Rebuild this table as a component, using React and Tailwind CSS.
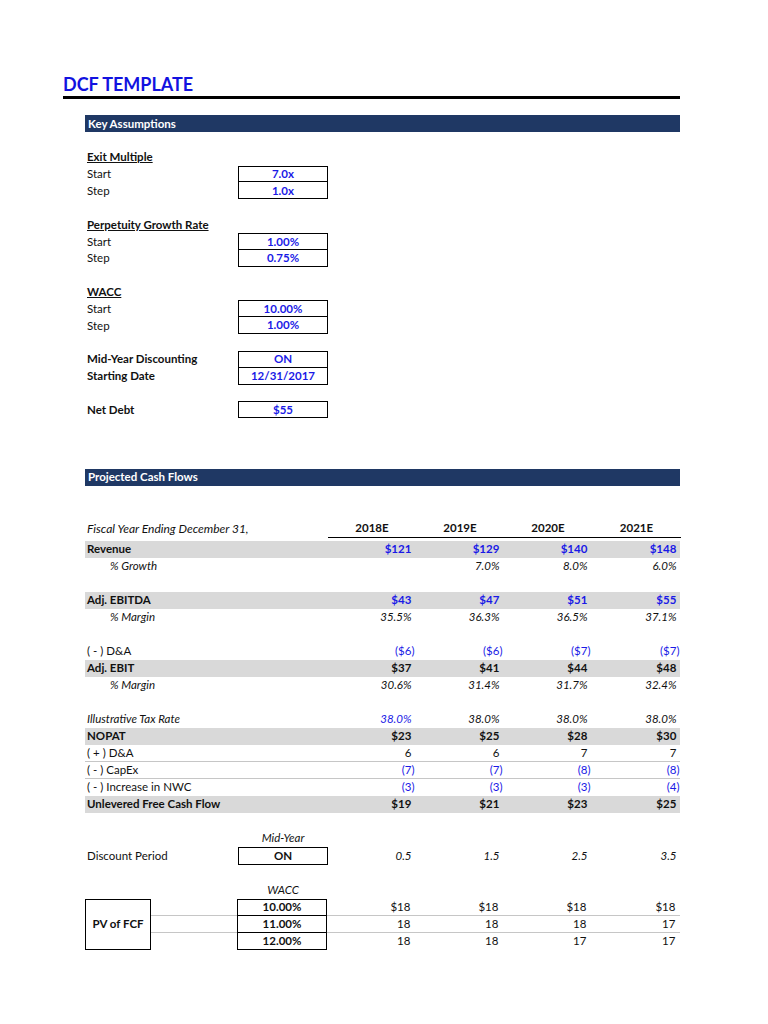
import React from 'react';

const GRID = 'grid grid-cols-[153px_90px_88px_88px_88px_89px]';

const Num = ({ v }) => (
    <>
        {v}
        {v && !v.startsWith('(') && <span className="invisible">)</span>}
    </>
);

const Assumption = ({ label, labelClass = '', box, first }) => (
    <div className="flex h-[16.85px]">
        <div className={`w-[153px] pl-[2px] flex items-center whitespace-nowrap ${labelClass}`}>{label}</div>
        {box && (
            <div className={`w-[90px] flex items-center justify-center border-x border-b border-black font-bold text-[#1a1ae6] ${first ? 'border-t' : ''}`}>
                {box}
            </div>
        )}
    </div>
);

const Blank = ({ h = 'h-[16.85px]' }) => <div className={h} />;

const DataRow = ({ label, labelClass = '', values = [], valueClass = '', firstClass, gray, line }) => (
    <div className={`${GRID} h-[17px] ${gray ? 'bg-[#d9d9d9]' : ''} ${line ? 'border-b border-[#c6c6c6]' : ''}`}>
        <div className={`pl-[2px] flex items-center whitespace-nowrap ${labelClass}`}>{label}</div>
        <div />
        {values.map((v, i) => (
            <div key={i} className={`flex items-center justify-end pr-[1.5px] ${i === 0 && firstClass ? firstClass : valueClass}`}>
                <Num v={v} />
            </div>
        ))}
    </div>
);

const SectionBar = ({ title }) => (
    <div className="h-[16.85px] bg-[#1f3864] text-white font-bold pl-[3px] flex items-center">{title}</div>
);

const App = () => {
    const blue = 'text-[#1a1ae6]';
    const pv = [
        { w: '10.00%', v: ['$18', '$18', '$18', '$18'] },
        { w: '11.00%', v: ['18', '18', '18', '17'] },
        { w: '12.00%', v: ['18', '18', '17', '17'] },
    ];

    return (
        <div className="w-[768px] h-[1024px] bg-white text-[#111] font-['Lato',sans-serif] text-[11.5px] leading-none">
            <div className="pl-[63px] pt-[75px] w-[680px]">
                <div className="h-[20px] text-[18px] font-bold text-[#1212e0]">DCF TEMPLATE</div>
                <div className="mt-[1px] border-t-[3px] border-black" />
            </div>

            <div className="ml-[85px] w-[595px] mt-[16px]">
                <SectionBar title="Key Assumptions" />
                <Blank />
                <Assumption label="Exit Multiple" labelClass="font-bold underline" />
                <Assumption label="Start" box="7.0x" first />
                <Assumption label="Step" box="1.0x" />
                <Blank />
                <Assumption label="Perpetuity Growth Rate" labelClass="font-bold underline" />
                <Assumption label="Start" box="1.00%" first />
                <Assumption label="Step" box="0.75%" />
                <Blank />
                <Assumption label="WACC" labelClass="font-bold underline" />
                <Assumption label="Start" box="10.00%" first />
                <Assumption label="Step" box="1.00%" />
                <Blank />
                <Assumption label="Mid-Year Discounting" labelClass="font-bold" box="ON" first />
                <Assumption label="Starting Date" labelClass="font-bold" box="12/31/2017" />
                <Blank />
                <Assumption label="Net Debt" labelClass="font-bold" box="$55" first />
                <Blank />
                <Blank />
                <Blank />
                <SectionBar title="Projected Cash Flows" />
                <Blank h="h-[34px]" />

                {/* header */}
                <div className={`${GRID} h-[18px] mb-[3px]`}>
                    <div className="pl-[2px] flex items-center italic whitespace-nowrap text-[12px]">Fiscal Year Ending December 31,</div>
                    <div />
                    {['2018E', '2019E', '2020E', '2021E'].map(y => (
                        <div key={y} className="flex items-center justify-center font-bold border-b-[1.5px] border-black">{y}</div>
                    ))}
                </div>

                <DataRow gray label="Revenue" labelClass="font-bold" values={['$121', '$129', '$140', '$148']} valueClass={`font-bold ${blue}`} />
                <DataRow label="% Growth" labelClass="italic pl-[25px]" values={['', '7.0%', '8.0%', '6.0%']} valueClass="italic" />
                <Blank h="h-[17px]" />
                <DataRow gray label="Adj. EBITDA" labelClass="font-bold" values={['$43', '$47', '$51', '$55']} valueClass={`font-bold ${blue}`} />
                <DataRow label="% Margin" labelClass="italic pl-[25px]" values={['35.5%', '36.3%', '36.5%', '37.1%']} valueClass="italic" />
                <Blank h="h-[17px]" />
                <DataRow label="( - ) D&A" values={['($6)', '($6)', '($7)', '($7)']} valueClass={blue} />
                <DataRow gray label="Adj. EBIT" labelClass="font-bold" values={['$37', '$41', '$44', '$48']} valueClass="font-bold" />
                <DataRow label="% Margin" labelClass="italic pl-[25px]" values={['30.6%', '31.4%', '31.7%', '32.4%']} valueClass="italic" />
                <Blank h="h-[17px]" />
                <DataRow label="Illustrative Tax Rate" labelClass="italic" values={['38.0%', '38.0%', '38.0%', '38.0%']} valueClass="italic" firstClass={`italic ${blue}`} />
                <DataRow gray label="NOPAT" labelClass="font-bold" values={['$23', '$25', '$28', '$30']} valueClass="font-bold" />
                <DataRow line label="( + ) D&A" values={['6', '6', '7', '7']} />
                <DataRow line label="( - ) CapEx" values={['(7)', '(7)', '(8)', '(8)']} valueClass={blue} />
                <DataRow label="( - ) Increase in NWC" values={['(3)', '(3)', '(3)', '(4)']} valueClass={blue} />
                <DataRow gray label="Unlevered Free Cash Flow" labelClass="font-bold" values={['$19', '$21', '$23', '$25']} valueClass="font-bold" />

                <Blank h="h-[17px]" />
                <div className={`${GRID} h-[17px]`}>
                    <div />
                    <div className="flex items-center justify-center italic">Mid-Year</div>
                </div>
                <div className={`${GRID} h-[18px]`}>
                    <div className="pl-[2px] flex items-center">Discount Period</div>
                    <div className="flex items-center justify-center font-bold border border-black">ON</div>
                    {['0.5', '1.5', '2.5', '3.5'].map((v, i) => (
                        <div key={i} className="flex items-center justify-end pr-[1.5px] italic"><Num v={v} /></div>
                    ))}
                </div>
                <Blank h="h-[17px]" />
                <div className={`${GRID} h-[17px]`}>
                    <div />
                    <div className="flex items-center justify-center italic">WACC</div>
                </div>

                <div className="flex">
                    <div className="w-[67px] h-[51px] border border-black flex items-center justify-center font-bold">PV of FCF</div>
                    <div className="flex-1">
                        {pv.map((r, idx) => (
                            <div key={r.w} className="grid grid-cols-[86px_90px_88px_88px_88px_89px] h-[17px]">
                                <div className={idx < 2 ? 'border-b border-[#c6c6c6]' : ''} />
                                <div className={`flex items-center justify-center font-bold border-x border-b border-black ${idx === 0 ? 'border-t' : ''}`}>{r.w}</div>
                                {r.v.map((v, i) => (
                                    <div key={i} className={`flex items-center justify-end pr-[1.5px] ${idx < 2 ? 'border-b border-[#c6c6c6]' : ''}`}>
                                        <Num v={v} />
                                    </div>
                                ))}
                            </div>
                        ))}
                    </div>
                </div>
            </div>
        </div>
    );
};

export default App;
